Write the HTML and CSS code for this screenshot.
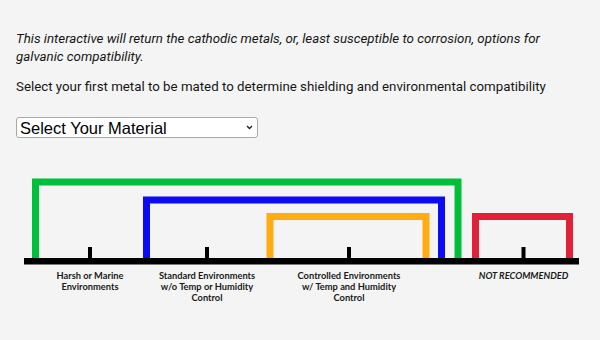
FILE: index.html
```html
<!DOCTYPE html>
<html lang="en">
<head>
    <meta charset="UTF-8">
    <title>Galvanic Compatibility</title>
    <link rel="stylesheet" href="styles.css">
</head>
<body>

    <!-- Intro -->
    <div class="intro">
        <p class="note">This interactive will return the cathodic metals, or, least susceptible to corrosion, options for galvanic compatibility.</p>
        <p class="lead">Select your first metal to be mated to determine shielding and environmental compatibility</p>
        <div class="picker">
            <select class="material">
                <option>Select Your Material</option>
            </select>
            <svg class="caret" width="7" height="5" viewBox="0 0 7 5">
                <path d="M1 1 L3.5 3.5 L6 1" fill="none" stroke="#222" stroke-width="1.4"/>
            </svg>
        </div>
    </div>

    <!-- Environment chart -->
    <svg class="chart" width="600" height="140" viewBox="0 170 600 140">
        <path d="M35.5 258 V182 H458 V258" class="bracket green"/>
        <path d="M146.5 258 V200 H441.5 V258" class="bracket blue"/>
        <path d="M270 258 V216.5 H426 V258" class="bracket orange"/>
        <path d="M475.5 258 V216.5 H569.5 V258" class="bracket red"/>

        <rect x="24" y="258" width="555" height="6.5" class="axis"/>
        <rect x="88" y="247" width="4" height="12" class="axis"/>
        <rect x="205" y="247" width="4" height="12" class="axis"/>
        <rect x="347" y="247" width="4" height="12" class="axis"/>
        <rect x="521.5" y="247" width="4" height="12" class="axis"/>

        <text class="label" x="90" y="278.5">Harsh or Marine</text>
        <text class="label" x="90" y="289.5">Environments</text>

        <text class="label" x="207" y="278.5">Standard Environments</text>
        <text class="label" x="207" y="289.5">w/o Temp or Humidity</text>
        <text class="label" x="207" y="300.5">Control</text>

        <text class="label" x="349" y="278.5">Controlled Environments</text>
        <text class="label" x="349" y="289.5">w/ Temp and Humidity</text>
        <text class="label" x="349" y="300.5">Control</text>

        <text class="label italic" x="523.5" y="278.5">NOT RECOMMENDED</text>
    </svg>

</body>
</html>
```

FILE: styles.css
```css
/* Reset and global styling */
* {
    margin: 0;
    padding: 0;
    box-sizing: border-box;
}
body {
    font-family: Roboto, 'Liberation Sans', Arial, sans-serif;
    background-color: #f4f4f4;
    color: #161616;
    width: 600px;
    height: 340px;
    overflow: hidden;
}

/* Intro text */
.intro {
    padding: 30px 16px 0;
}
.note {
    font-style: italic;
    font-size: 13.3px;
    line-height: 18px;
}
.lead {
    font-size: 13.3px;
    line-height: 18px;
    margin-top: 12px;
}

/* Material dropdown */
.picker {
    position: relative;
    width: 242px;
    margin-top: 21px;
}
.material {
    display: block;
    width: 242px;
    height: 21px;
    padding-left: 3px;
    font-family: Arial, 'Liberation Sans', sans-serif;
    font-size: 16.5px;
    color: #000;
    background-color: #fff;
    border: 1px solid #a9a9a9;
    border-radius: 3px;
    appearance: none;
    -webkit-appearance: none;
}
.caret {
    position: absolute;
    right: 5px;
    top: 8px;
}

/* Chart */
.chart {
    display: block;
    margin-top: 32px;
}
.bracket {
    fill: none;
    stroke-width: 7;
}
.green { stroke: #00bf3a; }
.blue { stroke: #0b0bf5; }
.orange { stroke: #ffab12; }
.red { stroke: #e22139; }
.axis {
    fill: #000;
}
.label {
    font-family: Lato, sans-serif;
    font-weight: 700;
    font-size: 9.3px;
    fill: #1a1a1a;
    text-anchor: middle;
}
.label.italic {
    font-style: italic;
}
```
